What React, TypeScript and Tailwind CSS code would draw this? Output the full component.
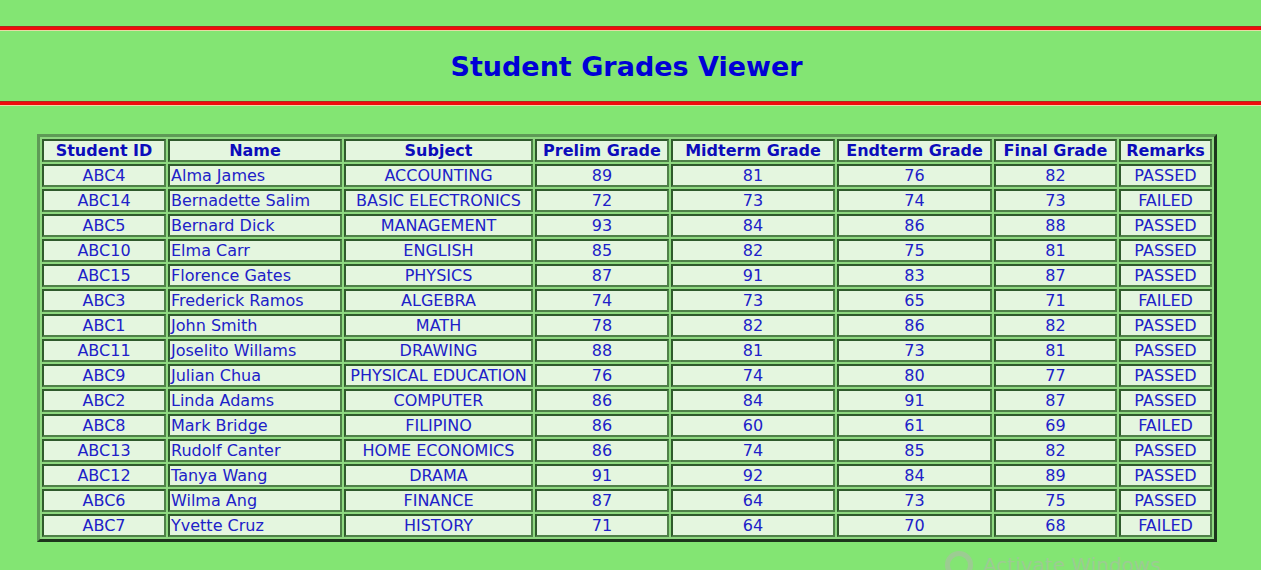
const rows = [
  ['ABC4', 'Alma James', 'ACCOUNTING', 89, 81, 76, 82, 'PASSED'],
  ['ABC14', 'Bernadette Salim', 'BASIC ELECTRONICS', 72, 73, 74, 73, 'FAILED'],
  ['ABC5', 'Bernard Dick', 'MANAGEMENT', 93, 84, 86, 88, 'PASSED'],
  ['ABC10', 'Elma Carr', 'ENGLISH', 85, 82, 75, 81, 'PASSED'],
  ['ABC15', 'Florence Gates', 'PHYSICS', 87, 91, 83, 87, 'PASSED'],
  ['ABC3', 'Frederick Ramos', 'ALGEBRA', 74, 73, 65, 71, 'FAILED'],
  ['ABC1', 'John Smith', 'MATH', 78, 82, 86, 82, 'PASSED'],
  ['ABC11', 'Joselito Willams', 'DRAWING', 88, 81, 73, 81, 'PASSED'],
  ['ABC9', 'Julian Chua', 'PHYSICAL EDUCATION', 76, 74, 80, 77, 'PASSED'],
  ['ABC2', 'Linda Adams', 'COMPUTER', 86, 84, 91, 87, 'PASSED'],
  ['ABC8', 'Mark Bridge', 'FILIPINO', 86, 60, 61, 69, 'FAILED'],
  ['ABC13', 'Rudolf Canter', 'HOME ECONOMICS', 86, 74, 85, 82, 'PASSED'],
  ['ABC12', 'Tanya Wang', 'DRAMA', 91, 92, 84, 89, 'PASSED'],
  ['ABC6', 'Wilma Ang', 'FINANCE', 87, 64, 73, 75, 'PASSED'],
  ['ABC7', 'Yvette Cruz', 'HISTORY', 71, 64, 70, 68, 'FAILED'],
];

const headers = ['Student ID', 'Name', 'Subject', 'Prelim Grade', 'Midterm Grade', 'Endterm Grade', 'Final Grade', 'Remarks'];
const widths = [124, 174, 189, 134, 164, 155, 123, 93];

const cell =
  'h-[23px] p-0 px-[1px] leading-[19px] whitespace-nowrap bg-[#e4f6df] border-2 border-t-[#2f5a2c] border-l-[#2f5a2c] border-r-[#4f8049] border-b-[#4f8049]';

function RedLine() {
  return (
    <div className="w-full">
      <div className="h-[1px] bg-[#b3261e]" />
      <div className="h-[3px] bg-[#f00c0c]" />
      <div className="h-[1px] bg-[#e9d9a6]" />
    </div>
  );
}

export default function App() {
  return (
    <div className="relative h-[570px] w-full overflow-hidden bg-[#83e573] font-['DejaVu_Sans',Verdana,sans-serif]">
      <div className="pt-[26px]">
        <RedLine />
        <h1 className="flex h-[70px] items-center justify-center pr-[8px] pt-[2px] text-[27px] font-bold text-[#0000d6]">
          Student Grades Viewer
        </h1>
        <RedLine />
      </div>

      <table
        className="ml-[37px] mt-[28px] w-[1180px] table-fixed border-separate border-spacing-[2px] border-[3px] border-t-[#5e9a56] border-l-[#5e9a56] border-r-[#1d361c] border-b-[#1d361c] bg-[#8ed880] text-[16px] text-[#2020c8]"
      >
        <colgroup>
          {widths.map((w, i) => (
            <col key={i} style={{ width: w }} />
          ))}
        </colgroup>
        <thead>
          <tr>
            {headers.map((h) => (
              <th key={h} className={`${cell} text-center font-bold text-[#0c0cbb]`}>
                {h}
              </th>
            ))}
          </tr>
        </thead>
        <tbody>
          {rows.map((r) => (
            <tr key={r[0] as string}>
              {r.map((v, i) => (
                <td key={i} className={`${cell} ${i === 1 ? 'text-left' : 'text-center'}`}>
                  {v}
                </td>
              ))}
            </tr>
          ))}
        </tbody>
      </table>

      <div className="absolute left-[945px] top-[550px] flex items-center gap-[10px] text-[20px] text-[#9ccc92]">
        <div className="h-[28px] w-[28px] rounded-full border-[5px] border-[#9ccc92]" />
        <span>Activate Windows</span>
      </div>
    </div>
  );
}
